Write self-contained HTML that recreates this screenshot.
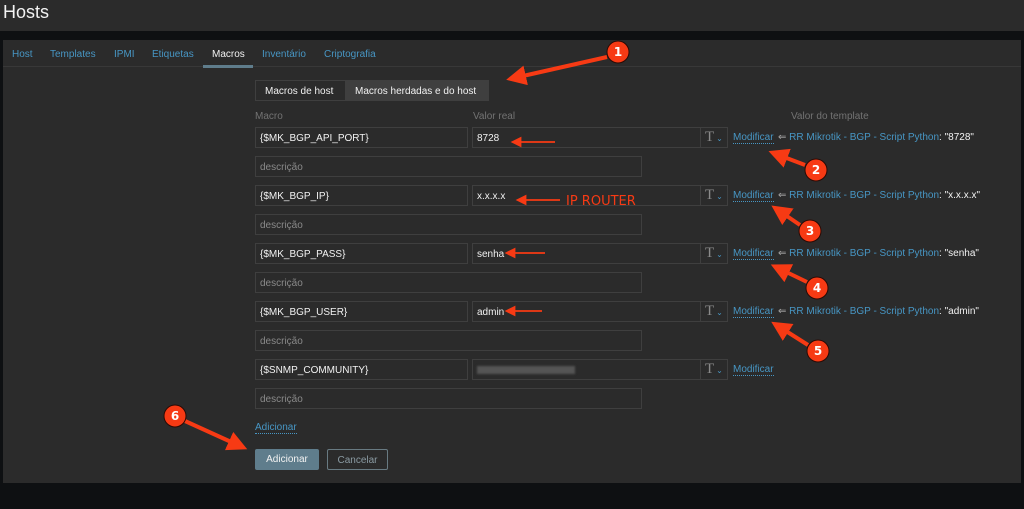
<!DOCTYPE html>
<html><head><meta charset="utf-8"><style>
*{box-sizing:border-box;margin:0;padding:0}
body{width:1024px;height:509px;background:#0e1012;font-family:"Liberation Sans",sans-serif;font-size:10px;color:#f2f2f2;position:relative;overflow:hidden}
.hdr{position:absolute;left:0;top:0;width:1024px;height:31px;background:#2b2b2b;}
.hdr h1{font-weight:normal;font-size:18px;position:absolute;left:3px;top:2px;color:#f2f2f2}
.panel{position:absolute;left:3px;top:40px;width:1018px;height:443px;background:#2b2b2b}
.tabs{position:absolute;left:0;top:0;width:100%;height:27px;border-bottom:1px solid #383838}
.tab{position:absolute;top:9px;color:#4796c4;font-size:10px}
.ab{position:absolute}
.inp{position:absolute;height:21px;border:1px solid #3f3f3f;background:#2b2b2b;font-size:10px;padding:5px 4px;color:#f2f2f2}
.ph{color:#8a8a8a}
.lbl{position:absolute;color:#737373;font-size:10px}
.link{position:absolute;color:#4796c4;border-bottom:1px dotted #4796c4;font-size:10px;line-height:11px}
.tv{position:absolute;font-size:10px;color:#f2f2f2}
.tv b{color:#4796c4;font-weight:normal}
.T{position:absolute;width:28px;height:21px;border:1px solid #3f3f3f;font-family:"Liberation Serif",serif;font-size:15px;color:#8a8a8a;padding:1px 0 0 4px}
.T i{font-style:normal;font-family:"Liberation Sans";font-size:8px;color:#4796c4;margin-left:2px}
</style></head><body>
<div class="hdr"><h1>Hosts</h1></div>
<div class="panel">
<div class="tabs">
<span class="tab" style="left:9px">Host</span>
<span class="tab" style="left:47px">Templates</span>
<span class="tab" style="left:111px">IPMI</span>
<span class="tab" style="left:149px">Etiquetas</span>
<span class="tab" style="left:209px;color:#f2f2f2">Macros</span>
<span class="tab" style="left:259px">Inventário</span>
<span class="tab" style="left:321px">Criptografia</span>
<div class="ab" style="left:200px;top:25px;width:50px;height:3px;background:#5f7d8c"></div>
</div>
</div>
<div class="ab" style="left:255px;top:80px;width:234px;height:21px;border:1px solid #3f3f3f;background:#2b2b2b"></div>
<div class="ab" style="left:345px;top:80px;width:144px;height:21px;background:#3f3f3f"></div>
<span class="ab" style="left:265px;top:86px">Macros de host</span>
<span class="ab" style="left:355px;top:86px">Macros herdadas e do host</span>
<span class="lbl" style="left:255px;top:111px">Macro</span>
<span class="lbl" style="left:473px;top:111px">Valor real</span>
<span class="lbl" style="left:791px;top:111px">Valor do template</span>

<div class="inp" style="left:255px;top:127px;width:213px">{$MK_BGP_API_PORT}</div>
<div class="inp" style="left:472px;top:127px;width:229px">8728</div>
<div class="T" style="left:700px;top:127px">T<i>⌄</i></div>
<span class="link" style="left:733px;top:132px">Modificar</span>
<span class="tv" style="left:778px;top:132px"><span style="color:#aaa">⇐</span> <b>RR Mikrotik - BGP - Script Python</b>: "8728"</span>
<div class="inp ph" style="left:255px;top:156px;width:387px">descrição</div>

<div class="inp" style="left:255px;top:185px;width:213px">{$MK_BGP_IP}</div>
<div class="inp" style="left:472px;top:185px;width:229px">x.x.x.x</div>
<div class="T" style="left:700px;top:185px">T<i>⌄</i></div>
<span class="link" style="left:733px;top:190px">Modificar</span>
<span class="tv" style="left:778px;top:190px"><span style="color:#aaa">⇐</span> <b>RR Mikrotik - BGP - Script Python</b>: "x.x.x.x"</span>
<div class="inp ph" style="left:255px;top:214px;width:387px">descrição</div>

<div class="inp" style="left:255px;top:243px;width:213px">{$MK_BGP_PASS}</div>
<div class="inp" style="left:472px;top:243px;width:229px">senha</div>
<div class="T" style="left:700px;top:243px">T<i>⌄</i></div>
<span class="link" style="left:733px;top:248px">Modificar</span>
<span class="tv" style="left:778px;top:248px"><span style="color:#aaa">⇐</span> <b>RR Mikrotik - BGP - Script Python</b>: "senha"</span>
<div class="inp ph" style="left:255px;top:272px;width:387px">descrição</div>

<div class="inp" style="left:255px;top:301px;width:213px">{$MK_BGP_USER}</div>
<div class="inp" style="left:472px;top:301px;width:229px">admin</div>
<div class="T" style="left:700px;top:301px">T<i>⌄</i></div>
<span class="link" style="left:733px;top:306px">Modificar</span>
<span class="tv" style="left:778px;top:306px"><span style="color:#aaa">⇐</span> <b>RR Mikrotik - BGP - Script Python</b>: "admin"</span>
<div class="inp ph" style="left:255px;top:330px;width:387px">descrição</div>

<div class="inp" style="left:255px;top:359px;width:213px">{$SNMP_COMMUNITY}</div>
<div class="inp" style="left:472px;top:359px;width:229px"><div style="width:98px;height:8px;margin-top:1px;background:#555;filter:blur(1px)"></div></div>
<div class="T" style="left:700px;top:359px">T<i>⌄</i></div>
<span class="link" style="left:733px;top:364px">Modificar</span>
<div class="inp ph" style="left:255px;top:388px;width:387px">descrição</div>

<span class="link" style="left:255px;top:422px">Adicionar</span>
<div class="ab" style="left:255px;top:449px;width:64px;height:21px;background:#5f7d8c;border-radius:2px;text-align:center;padding-top:5px">Adicionar</div>
<div class="ab" style="left:327px;top:449px;width:61px;height:21px;border:1px solid #687a82;border-radius:2px;text-align:center;padding-top:5px;color:#8a9aa2">Cancelar</div>

<svg class="ab" style="left:0;top:0" width="1024" height="509">
<defs><marker id="h" markerWidth="5" markerHeight="5" refX="3" refY="2.5" orient="auto"><path d="M0,0L5,2.5L0,5z" fill="#f73a14"/></marker>
<marker id="s" markerWidth="6" markerHeight="6" refX="3" refY="3" orient="auto"><path d="M0,0L6,3L0,6z" fill="#f73a14"/></marker></defs>
<g stroke="#f73a14" stroke-width="4" fill="none" marker-end="url(#h)">
<line x1="607" y1="57" x2="514" y2="78"/>
<line x1="805" y1="165" x2="776" y2="154"/>
<line x1="800" y1="225" x2="778" y2="210"/>
<line x1="807" y1="282" x2="778" y2="268"/>
<line x1="808" y1="345" x2="778" y2="326"/>
<line x1="185" y1="421" x2="240" y2="446"/>
</g>
<g stroke="#f73a14" stroke-width="1.8" fill="none" marker-end="url(#s)">
<line x1="555" y1="142" x2="516" y2="142"/>
<line x1="560" y1="200" x2="521" y2="200"/>
<line x1="545" y1="253" x2="510" y2="253"/>
<line x1="542" y1="311" x2="510" y2="311"/>
</g>
<text x="566" y="205" fill="#f73a14" font-family="DejaVu Sans" font-size="13">IP ROUTER</text>
<g fill="#f73a14" stroke="#2a0a05" stroke-width="1">
<circle cx="618" cy="52" r="11"/><circle cx="816" cy="170" r="11"/><circle cx="810" cy="231" r="11"/>
<circle cx="817" cy="288" r="11"/><circle cx="818" cy="351" r="11"/><circle cx="175" cy="416" r="11"/>
</g>
<g fill="#fff" font-family="DejaVu Sans" font-weight="bold" font-size="12" text-anchor="middle">
<text x="618" y="56">1</text><text x="816" y="174">2</text><text x="810" y="235">3</text>
<text x="817" y="292">4</text><text x="818" y="355">5</text><text x="175" y="420">6</text>
</g>
</svg>
</body></html>
